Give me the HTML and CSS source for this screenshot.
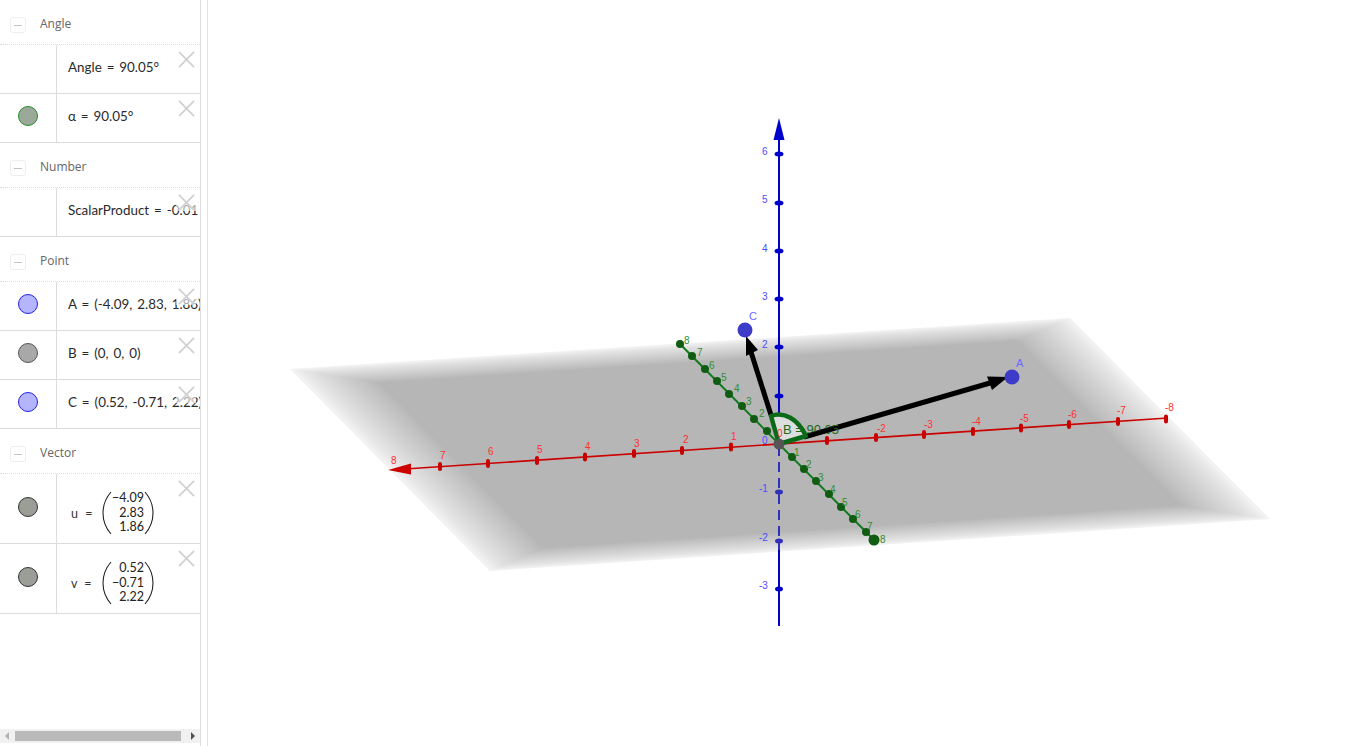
FILE: index.html
```html
<!DOCTYPE html>
<html lang="en">
<head>
<meta charset="utf-8">
<title>GeoGebra 3D</title>
<link rel="stylesheet" href="styles.css">
</head>
<body>
<div class="app">
  <aside class="algebra">
    <div class="list">
      <div class="group"><span class="toggle"><i></i></span><span class="group-name">Angle</span></div>
      <div class="row"><div class="marble-cell"></div><div class="cell">Angle = 90.05°</div><button class="close"><svg viewBox="0 0 18 18"><path d="M1 1L17 17M17 1L1 17"/></svg></button></div>
      <div class="row"><div class="marble-cell"><span class="marble m-angle"></span></div><div class="cell">α = 90.05°</div><button class="close"><svg viewBox="0 0 18 18"><path d="M1 1L17 17M17 1L1 17"/></svg></button></div>
      <div class="group"><span class="toggle"><i></i></span><span class="group-name">Number</span></div>
      <div class="row"><div class="marble-cell"></div><div class="cell">ScalarProduct = -0.01</div><button class="close"><svg viewBox="0 0 18 18"><path d="M1 1L17 17M17 1L1 17"/></svg></button></div>
      <div class="group"><span class="toggle"><i></i></span><span class="group-name">Point</span></div>
      <div class="row"><div class="marble-cell"><span class="marble m-blue"></span></div><div class="cell">A = (-4.09, 2.83, 1.86)</div><button class="close"><svg viewBox="0 0 18 18"><path d="M1 1L17 17M17 1L1 17"/></svg></button></div>
      <div class="row"><div class="marble-cell"><span class="marble m-gray"></span></div><div class="cell">B = (0, 0, 0)</div><button class="close"><svg viewBox="0 0 18 18"><path d="M1 1L17 17M17 1L1 17"/></svg></button></div>
      <div class="row"><div class="marble-cell"><span class="marble m-blue"></span></div><div class="cell">C = (0.52, -0.71, 2.22)</div><button class="close"><svg viewBox="0 0 18 18"><path d="M1 1L17 17M17 1L1 17"/></svg></button></div>
      <div class="group"><span class="toggle"><i></i></span><span class="group-name">Vector</span></div>
      <div class="row tall"><div class="marble-cell"><span class="marble m-vector"></span></div>
        <div class="cell matrix-cell"><span class="mlabel">u =</span>
          <svg class="paren" viewBox="0 0 10 44"><path d="M9 1C2 9 1 16 1 22C1 28 2 35 9 43"/></svg>
          <div class="matrix"><span>−4.09</span><span>2.83</span><span>1.86</span></div>
          <svg class="paren" viewBox="0 0 10 44"><path d="M1 1C8 9 9 16 9 22C9 28 8 35 1 43"/></svg>
        </div><button class="close"><svg viewBox="0 0 18 18"><path d="M1 1L17 17M17 1L1 17"/></svg></button></div>
      <div class="row tall"><div class="marble-cell"><span class="marble m-vector"></span></div>
        <div class="cell matrix-cell"><span class="mlabel">v =</span>
          <svg class="paren" viewBox="0 0 10 44"><path d="M9 1C2 9 1 16 1 22C1 28 2 35 9 43"/></svg>
          <div class="matrix"><span>0.52</span><span>−0.71</span><span>2.22</span></div>
          <svg class="paren" viewBox="0 0 10 44"><path d="M1 1C8 9 9 16 9 22C9 28 8 35 1 43"/></svg>
        </div><button class="close"><svg viewBox="0 0 18 18"><path d="M1 1L17 17M17 1L1 17"/></svg></button></div>
    </div>
    <div class="hscroll">
      <svg class="arrow" viewBox="0 0 6 10"><path d="M5 1V9L1 5Z"/></svg>
      <div class="track"><div class="thumb"></div></div>
      <svg class="arrow dark" viewBox="0 0 6 10"><path d="M1 1V9L5 5Z"/></svg>
    </div>
  </aside>
  <div class="splitter"></div>
  <main class="view3d">
    <svg class="scene" viewBox="208 0 1144 746" preserveAspectRatio="xMinYMin slice">
      <defs><polygon id="plane" points="-490,-75 290,-126 490,75 -290,127"/></defs>
      <g transform="translate(780 444)">
        <use href="#plane" fill="#f2f2f2"/>
        <use href="#plane" fill="#eeeeee" transform="scale(.99)"/>
        <use href="#plane" fill="#e9e9e9" transform="scale(.98)"/>
        <use href="#plane" fill="#e5e5e5" transform="scale(.97)"/>
        <use href="#plane" fill="#e1e1e1" transform="scale(.96)"/>
        <use href="#plane" fill="#dedede" transform="scale(.95)"/>
        <use href="#plane" fill="#dbdbdb" transform="scale(.94)"/>
        <use href="#plane" fill="#d8d8d8" transform="scale(.93)"/>
        <use href="#plane" fill="#d5d5d5" transform="scale(.92)"/>
        <use href="#plane" fill="#d2d2d2" transform="scale(.91)"/>
        <use href="#plane" fill="#cfcfcf" transform="scale(.90)"/>
        <use href="#plane" fill="#cccccc" transform="scale(.89)"/>
        <use href="#plane" fill="#c9c9c9" transform="scale(.88)"/>
        <use href="#plane" fill="#c6c6c6" transform="scale(.87)"/>
        <use href="#plane" fill="#c3c3c3" transform="scale(.86)"/>
        <use href="#plane" fill="#c0c0c0" transform="scale(.85)"/>
        <use href="#plane" fill="#bdbdbd" transform="scale(.84)"/>
        <use href="#plane" fill="#b9b9b9" transform="scale(.83)"/>
        <use href="#plane" fill="#b6b6b6" transform="scale(.82)"/>
      </g>

      <!-- z axis -->
      <path class="z-line" d="M779 136V444M779 550V626"/>
      <path class="z-dash" d="M779 446V550"/>
      <polygon class="z-fill" points="779,118 773.500,140 784.500,140"/>
      <g class="z-fill">
        <ellipse cx="779" cy="154" rx="4.500" ry="2.500"/><ellipse cx="779" cy="203" rx="4.500" ry="2.500"/>
        <ellipse cx="779" cy="251" rx="4.500" ry="2.500"/><ellipse cx="779" cy="299" rx="4.500" ry="2.500"/>
        <ellipse cx="779" cy="347" rx="4.500" ry="2.500"/><ellipse cx="779" cy="396" rx="4.500" ry="2.500"/>
        <ellipse cx="779" cy="589" rx="4" ry="2.500"/>
      </g>
      <g class="z-under">
        <ellipse cx="779" cy="492" rx="4" ry="2.500"/><ellipse cx="779" cy="541" rx="4" ry="2.500"/>
      </g>
      <g class="lbl lbl-blue">
        <text x="762" y="155">6</text><text x="762" y="203">5</text><text x="762" y="252">4</text>
        <text x="762" y="300">3</text><text x="762" y="348">2</text><text x="762" y="397">1</text>
        <text x="762" y="444">0</text><text x="759" y="492">-1</text><text x="759" y="541">-2</text>
        <text x="759" y="589">-3</text>
      </g>

      <!-- y axis -->
      <path class="y-line" d="M680 344L874 540"/>
      <g class="y-dots">
        <circle cx="680" cy="344" r="4"/><circle cx="692" cy="356" r="4"/><circle cx="705" cy="369" r="4"/>
        <circle cx="717" cy="381" r="4"/><circle cx="729" cy="394" r="4"/><circle cx="742" cy="406" r="4"/>
        <circle cx="754" cy="419" r="4"/><circle cx="767" cy="431" r="4"/><circle cx="792" cy="457" r="4"/>
        <circle cx="804" cy="469" r="4"/><circle cx="816" cy="481" r="4"/><circle cx="829" cy="494" r="4"/>
        <circle cx="841" cy="507" r="4"/><circle cx="853" cy="519" r="4"/><circle cx="866" cy="532" r="4"/>
        <circle cx="874" cy="540" r="5.500"/>
      </g>
      <g class="lbl lbl-green">
        <text x="684" y="344">8</text><text x="697" y="356">7</text><text x="709" y="369">6</text>
        <text x="721" y="381">5</text><text x="734" y="392">4</text><text x="746" y="405">3</text>
        <text x="759" y="417">2</text><text x="794" y="456">1</text><text x="806" y="468">2</text>
        <text x="818" y="481">3</text><text x="830" y="493">4</text><text x="842" y="506">5</text>
        <text x="855" y="518">6</text><text x="867" y="530">7</text><text x="880" y="543">8</text>
      </g>

      <!-- x axis -->
      <path class="x-line" d="M405 469L1168 418"/>
      <polygon class="x-fill" points="388,470 411,463.500 411,474.500"/>
      <g class="x-ticks">
        <path d="M440 464V469M488 461V466M537 458V463M585 454.500V459.500M634 451V456M682 448V453M731 444.500V449.500M827 438V443M876 435V440M924 432V437M973 429V434M1021 425.500V430.500M1069 422V427M1118 419V424M1166 416.500V421.500"/>
      </g>
      <g class="lbl lbl-red">
        <text x="391" y="464">8</text><text x="440" y="459">7</text><text x="488" y="455">6</text>
        <text x="537" y="453">5</text><text x="585" y="450">4</text><text x="634" y="447">3</text>
        <text x="683" y="443">2</text><text x="731" y="440">1</text>
        <text x="877" y="432">-2</text><text x="924" y="428">-3</text><text x="972" y="425">-4</text>
        <text x="1020" y="422">-5</text><text x="1068" y="418">-6</text><text x="1117" y="414">-7</text><text x="1165" y="411">-8</text>
      </g>

      <!-- vectors -->
      <path class="vec" d="M771 415L751 352"/>
      <polygon class="vec-head" points="746,336 746,356 758,350"/>
      <path class="vec" d="M804 437L990 383"/>
      <polygon class="vec-head" points="1008,377 987,376.500 992,390"/>

      <!-- angle -->
      <path class="sector" d="M779 444L771 416C784 411 798 419 806 436Z"/>
      <text class="angle-label" x="783" y="434">B = 90.05</text>
      <path class="vec vec-over" d="M808 436L834 428.500"/>
      <text class="lbl lbl-red" x="777" y="437">0</text>
      <circle class="origin" cx="779" cy="444" r="5.500"/>

      <!-- points -->
      <circle class="pt" cx="745" cy="330" r="7.500"/>
      <text class="pt-label" x="749" y="320">C</text>
      <circle class="pt" cx="1012" cy="377" r="7.500"/>
      <text class="pt-label" x="1016" y="367">A</text>
    </svg>
  </main>
</div>
</body>
</html>
```

FILE: styles.css
```css
* { box-sizing: border-box; }
html, body { margin: 0; height: 100%; background: #fff; overflow: hidden; }
.app { display: flex; height: 100vh; }

.algebra {
  width: 201px;
  flex: none;
  display: flex;
  flex-direction: column;
  border-right: 1px solid #dcdcdc;
}
.list { flex: 1; }

.group {
  height: 45px;
  display: flex;
  align-items: flex-start;
  padding: 17px 0 0 10px;
  border-bottom: 1px dotted #dcdcdc;
}
.toggle {
  width: 16px;
  height: 16px;
  border: 1px solid #eeeeee;
  border-radius: 3px;
  display: flex;
  align-items: center;
  justify-content: center;
}
.toggle i { width: 8px; height: 1px; background: #c4c4c4; display: block; }
.group-name {
  font: 12px/14px "Open Sans", sans-serif;
  color: #666;
  margin-left: 14px;
}

.row {
  position: relative;
  height: 49px;
  display: flex;
  border-bottom: 1px solid #dcdcdc;
}
.row.tall { height: 70px; }
.marble-cell {
  width: 57px;
  flex: none;
  border-right: 1px solid #dcdcdc;
  padding-bottom: 4px;
  display: flex;
  align-items: center;
  justify-content: center;
}
.marble { width: 20px; height: 20px; border-radius: 50%; border: 1px solid #333; display: block; }
.m-angle { background: #9aa99a; border-color: #2a8a2a; }
.m-blue { background: #b4b4ff; border-color: #2222dd; }
.m-gray { background: #a8a8a8; border-color: #555555; }
.m-vector { background: #9a9e96; border-color: #333333; }

.cell {
  flex: 1;
  min-width: 0;
  padding: 0 0 5px 11px;
  display: flex;
  align-items: center;
  white-space: pre;
  overflow: hidden;
  font: 13.4px "Lato", sans-serif;
  word-spacing: 1.5px;
  color: #2a2a2a;
}
.close {
  position: absolute;
  top: 6px;
  right: 4px;
  width: 20px;
  height: 17px;
  padding: 0 1px 0 2px;
  border: 0;
  background: rgba(255, 255, 255, .6);
  display: block;
}
.close svg { width: 17px; height: 17px; display: block; }
.close path { stroke: #d0d0d0; stroke-width: 1.8; fill: none; }

.matrix-cell { padding: 9px 0 0 14px; font-size: 12.5px; word-spacing: 0; }
.mlabel { width: 31px; flex: none; word-spacing: 4px; color: #333; }
.paren { width: 10px; height: 44px; flex: none; }
.paren path { stroke: #222; stroke-width: 1.1; fill: none; }
.matrix {
  width: 32px;
  display: flex;
  flex-direction: column;
  align-items: flex-end;
  line-height: 14.500px;
  color: #222;
}

.hscroll {
  height: 14px;
  margin: 0 0 3px;
  background: #f1f1f1;
  display: flex;
  align-items: center;
  padding: 0 4px;
}
.arrow { width: 6px; height: 10px; flex: none; }
.arrow path { fill: #b4b4b4; }
.arrow.dark path { fill: #505050; }
.track { flex: 1; height: 100%; padding: 2px 9px 2px 5px; }
.thumb { height: 100%; background: #b9b9b9; }

.splitter { width: 7px; flex: none; border-right: 1px solid #e4e4e4; }
.view3d { flex: 1; min-width: 0; }
.scene { width: 100%; height: 100%; display: block; }

.z-line { stroke: #0000cc; stroke-width: 2; fill: none; }
.z-dash { stroke: #3030b8; stroke-width: 2; fill: none; stroke-dasharray: 10 6; }
.z-fill { fill: #0000cc; }
.z-under { fill: #3030b8; }
.y-line { stroke: #0f7a1c; stroke-width: 2; fill: none; }
.y-dots { fill: #0f5c12; }
.x-line { stroke: #cc0000; stroke-width: 1.7; fill: none; }
.x-fill { fill: #cc0000; }
.x-ticks path { stroke: #c80000; stroke-width: 4; stroke-linecap: round; fill: none; }

.lbl { font: 10px "Liberation Sans", sans-serif; }
.lbl-blue { fill: #4a4aff; }
.lbl-green { fill: #2f8f2f; }
.lbl-red { fill: #ff3030; }

.vec { stroke: #000; stroke-width: 5; fill: none; }
.vec-over { stroke-width: 4; }
.vec-head { fill: #000; }
.sector { fill: #dedede; stroke: #0b6a18; stroke-width: 4.5; stroke-linejoin: round; }
.angle-label { font: 13px "Liberation Sans", sans-serif; fill: #1d6a1d; }
.origin { fill: #555; }
.pt { fill: #3c3cc8; }
.pt-label { font: 11px "Liberation Sans", sans-serif; fill: #6a6aff; }
```
